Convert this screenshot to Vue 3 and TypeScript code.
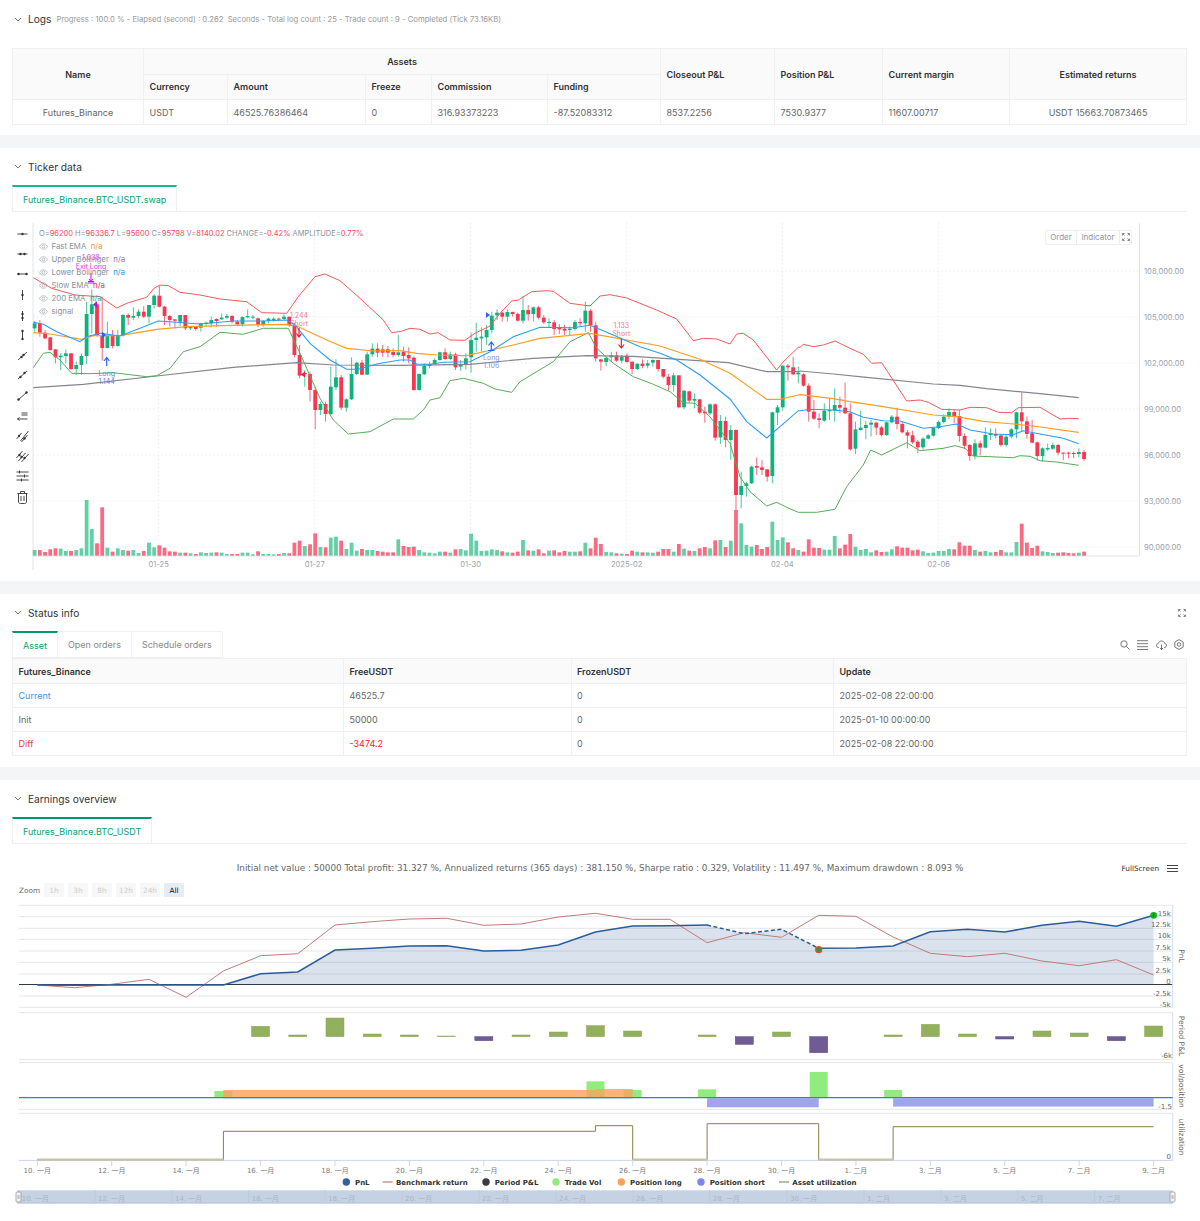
<script setup lang="ts">
type Candle = [number, number, number, number, number];

// candles read off the chart: wick top, body top, body bottom, wick bottom, up?
const raw: Candle[] = [
  [303,310,325,335,1],[300,310,338,350,0],[330,338,355,358,0],[352,352,390,392,0],[388,388,412,430,0],[400,407,412,450,1],[388,400,408,430,1],[400,400,447,450,0],[425,435,447,465,1],[400,408,435,465,1],
  [245,282,408,432,1],[208,253,282,340,1],[250,253,345,350,0],[230,345,384,422,0],[305,347,384,385,1],[330,347,378,385,0],[330,347,378,380,1],[282,285,347,350,1],[280,285,293,315,0],[262,288,293,300,1],
  [268,275,288,295,1],[258,275,290,295,0],[255,255,290,310,1],[222,227,255,265,1],[197,227,260,262,0],[258,260,288,315,0],[285,288,300,320,0],[298,298,302,325,0],[285,285,305,318,1],[285,285,325,330,0],
  [318,320,325,330,1],[318,320,327,332,0],[308,310,323,335,1],[305,308,312,320,1],[290,300,310,322,1],[295,297,303,320,0],[280,293,298,300,1],[282,288,293,298,1],[285,288,305,310,0],[300,305,313,318,0],
  [290,291,313,320,1],[268,288,292,295,1],[285,290,293,298,1],[293,295,315,322,0],[300,303,315,320,1],[293,296,303,310,1],[292,296,300,305,1],[293,296,299,304,0],[283,290,297,300,1],[290,290,316,320,0],
  [308,316,405,412,0],[375,405,467,475,0],[450,459,462,500,1],[455,462,510,545,0],[500,510,570,628,0],[545,552,570,585,1],[545,552,582,605,0],[440,500,582,585,1],[418,472,502,510,1],[465,472,563,570,0],
  [535,538,563,575,1],[412,462,538,540,1],[425,428,462,465,1],[420,428,464,465,0],[395,403,464,465,1],[370,386,403,410,1],[370,386,398,412,0],[375,388,398,410,0],[378,388,398,412,0],[385,396,405,412,0],
  [345,397,405,410,1],
  [380,395,408,425,0],[382,405,415,430,0],[410,413,510,512,0],[460,462,510,512,1],[430,437,463,465,1],[425,432,438,445,1],[415,420,432,435,1],[395,397,420,422,1],[385,397,417,420,0],
  [395,403,417,420,1],[398,403,442,450,0],[420,432,440,452,1],[400,415,435,448,1],[338,360,412,458,1],[308,353,360,395,1],[322,350,355,395,1],[315,330,352,375,1],[275,287,330,340,1],[268,278,286,300,1],
  [275,278,290,305,0],[268,276,290,305,1],[275,276,282,290,0],[278,282,302,305,0],[228,270,302,310,1],[255,270,283,302,0],[260,262,282,305,1],[258,262,293,298,0],[285,293,307,312,0],[295,306,309,322,1],
  [300,307,327,345,0],[312,323,328,342,0],[315,326,332,345,0],[320,326,330,345,1],[300,306,327,332,1],[295,306,310,320,0],[245,272,310,335,1],[268,272,316,335,0],[305,316,415,425,0],[418,418,425,452,0],
  [410,414,426,438,1],[395,406,412,425,1],[395,406,422,425,0],[405,410,422,430,1],[400,407,426,428,0],[425,425,447,462,0],[430,431,447,450,1],[418,431,438,445,0],[420,430,437,445,1],[418,420,428,440,1],
  [420,420,447,455,0],[447,447,470,475,0],[462,470,495,512,0],[458,466,495,515,1],[466,466,562,565,0],[510,512,562,568,1],[512,514,542,548,0],[520,537,542,565,1],[538,538,578,582,0],[560,575,580,608,0],
  [550,553,580,585,1],[550,553,653,662,0],[585,603,652,672,1],[590,603,660,682,0],[615,630,660,720,1],[628,630,825,870,0],[755,798,825,865,1],[785,790,798,830,1],[737,740,790,792,1],[712,738,743,765,0],
  [720,742,750,765,0],[748,748,770,785,0],[575,577,768,790,1],[555,562,578,615,1],[435,437,562,572,1],[432,437,442,482,0],[410,442,463,465,0],[440,458,463,490,1],
  [460,463,497,500,0],[490,497,575,605,0],[540,575,596,600,0],[580,595,600,625,0],[550,572,602,605,1],[533,570,574,600,1],[505,555,572,605,1],[530,555,563,580,0],[488,563,580,582,0],[550,580,688,692,0],
  [605,628,686,702,1],[572,623,630,632,1],[602,615,624,658,1],[600,608,614,650,1],[605,608,623,645,0],[618,622,645,650,0],[605,607,645,648,1],[585,590,607,610,1],[563,590,612,628,0],[605,612,637,640,0],
  [630,637,647,685,0],[632,646,667,672,0],[660,665,682,700,0],[652,656,682,688,1],[642,646,656,658,1],[622,624,647,650,1],[602,606,624,628,1],[583,590,606,610,1],[565,576,590,598,1],[570,576,588,610,0],
  [570,588,648,665,0],[640,648,677,688,0],[672,675,708,722,0],[658,670,708,718,1],[662,670,683,705,0],[622,645,683,685,1],[625,640,645,660,1],[625,642,647,655,0],[643,646,675,680,0],[645,650,675,680,1],
  [625,628,650,655,1],[575,577,628,655,1],[517,577,604,635,0],[590,604,642,656,0],[600,640,668,670,0],[665,667,708,722,0],[682,685,708,725,1],[670,684,688,692,1],[668,675,686,690,1],[672,675,698,706,0],
  [697,698,701,720,0],[695,698,701,715,0],[695,699,702,715,0],[685,696,702,712,1],[690,696,717,723,0],
];

const vols = [
  990,990,996,988,985,986,993,993,990,985,840,927,970,862,983,995,985,990,992,990,
  999,993,968,982,976,983,994,995,998,998,1000,1002,997,999,998,997,998,1002,1002,1002,
  998,998,1003,994,1002,1002,1003,1002,999,1000,968,962,978,973,940,981,982,953,950,962,
  987,968,992,987,990,990,993,995,997,997,958,
  978,981,980,990,997,998,1000,995,995,
  998,988,987,991,941,962,993,992,988,990,994,997,998,995,960,991,992,988,1000,992,
  991,997,993,995,995,994,968,985,953,972,996,997,1000,1001,1002,992,995,997,997,998,
  995,987,987,995,972,986,992,993,985,981,985,961,960,981,962,870,910,975,980,975,
  987,981,905,960,952,967,985,990,
  995,958,983,984,989,989,948,985,974,942,980,990,987,997,991,996,995,988,979,983,
  983,991,989,994,999,998,993,993,987,988,967,977,977,990,995,993,997,996,990,997,
  997,966,911,968,984,977,994,996,999,998,997,999,1000,998,995,
];

const ky = (z: number) => 220 + z / 3;
const kx = (i: number) => 34.67 + 5.195 * i;

const candles = raw.map((c, i) => ({
  x: kx(i),
  wt: ky(c[0]),
  t: ky(c[1]),
  b: ky(c[2]),
  wb: ky(c[3]),
  color: c[4] ? "#10b27c" : "#f6374f",
  vtop: ky(vols[i] ?? 1000),
  vcolor: c[4] ? "#63cfa5" : "#fa6a82",
}));

// zoomed coordinates -> page coordinates, one list per 400px strip
const line = (...segs: [number, number[]][]) => {
  const pts: string[] = [];
  segs.forEach(([ox, p]) => {
    for (let i = 0; i < p.length; i += 2) {
      pts.push(`${(ox + p[i] / 3).toFixed(1)},${ky(p[i + 1]).toFixed(1)}`);
    }
  });
  return pts.join(" ");
};

const klines = [
  { color: "#85858f", w: 1.2, pts: line(
    [0, [100,503,250,493,470,468,700,442,890,428,1000,435,1195,436]],
    [400, [0,436,210,433,400,415,560,407,700,409,985,428,1100,455,1195,455]],
    [800, [0,453,100,462,200,472,400,492,480,496,560,506,720,521,836,533]]) },
  { color: "#f55a5a", w: 1, pts: line(
    [0, [100,173,155,205,225,225,300,230,350,264,385,248,440,232,462,205,480,195,505,197,540,217,600,225,660,237,740,245,785,278,860,280,895,230,945,170,975,162,1020,182,1080,235,1150,300,1175,338,1195,335]],
    [400, [0,335,30,325,60,328,90,342,115,338,150,360,195,361,225,340,270,318,300,280,335,243,355,240,395,215,440,212,460,214,510,250,570,258,600,228,630,224,680,234,770,270,830,297,880,362,910,355,950,357,990,372,1010,342,1030,340,1060,360,1130,450,1150,425,1195,382]],
    [800, [0,382,10,373,40,380,70,375,105,363,150,385,190,403,215,430,245,428,320,543,360,540,385,547,425,568,480,570,510,562,560,563,595,577,635,578,655,563,720,562,780,597,805,595,836,596]]) },
  { color: "#57ad57", w: 1, pts: line(
    [0, [100,443,130,400,150,397,180,420,215,460,270,461,340,458,440,470,470,467,510,445,550,395,600,380,660,337,730,343,790,325,865,325,900,400,960,535,1000,600,1045,642,1110,635,1180,597,1195,597]],
    [400, [0,597,40,597,70,570,90,540,120,533,150,482,190,475,250,490,285,507,335,517,360,485,460,425,510,365,565,338,590,385,640,430,700,470,760,493,810,515,850,548,885,550,930,590,990,670,1020,770,1050,815,1100,858,1130,847,1160,862,1195,877]],
    [800, [0,877,50,877,105,868,140,800,190,735,212,690,245,705,320,668,360,692,430,685,465,677,495,685,520,708,640,713,660,707,690,709,720,722,770,726,836,736]]) },
  { color: "#ff9d1e", w: 1.2, pts: line(
    [0, [100,338,150,342,245,358,280,347,360,347,470,328,560,320,700,316,860,313,890,318,980,360,1040,385,1120,393,1195,392]],
    [400, [0,392,50,400,110,405,200,407,340,375,420,355,570,340,780,378,900,418,990,460,1100,538,1140,538,1195,525]],
    [800, [0,524,100,536,150,545,250,560,400,585,470,590,550,604,640,612,700,618,836,637]]) },
  { color: "#2a9df4", w: 1.1, pts: line(
    [0, [100,307,130,313,170,335,240,365,260,350,300,340,360,348,420,325,475,303,520,306,600,312,700,303,790,303,860,300,885,315,930,370,990,420,1040,448,1075,448,1130,432,1195,421]],
    [400, [0,420,30,420,50,432,90,433,130,427,210,425,270,395,340,350,420,322,520,323,570,316,640,345,720,380,780,400,830,420,900,465,990,537,1040,605,1100,654,1140,620,1195,572]],
    [800, [0,572,30,568,100,570,150,575,190,592,250,602,300,603,370,625,420,620,470,612,510,630,580,642,640,644,670,632,720,642,790,655,836,671]]) },
];

const priceTicks = [
  ["108,000.00", 271], ["105,000.00", 317], ["102,000.00", 363],
  ["99,000.00", 409], ["96,000.00", 455], ["93,000.00", 501], ["90,000.00", 547],
] as [string, number][];
const timeTicks = [
  ["01-25", 158.7], ["01-27", 314.7], ["01-30", 470.7],
  ["2025-02", 626.7], ["02-04", 782.3], ["02-06", 938.7],
] as [string, number][];

const legend = [
  { name: "Fast EMA", value: "n/a", color: "#f7931a" },
  { name: "Upper Bollinger", value: "n/a", color: "#9c5fd6" },
  { name: "Lower Bollinger", value: "n/a", color: "#2196f3" },
  { name: "Slow EMA", value: "n/a", color: "#e91e63" },
  { name: "200 EMA", value: "n/a", color: "#26a69a" },
  { name: "signal", value: "", color: "" },
];

const ohlc = [
  ["O=", "96200"], ["H=", "96336.7"], ["L=", "95600"], ["C=", "95798"], ["V=", "8140.02"],
  ["CHANGE=", "-0.42%"], ["AMPLITUDE=", "0.77%"],
];

const tools = [
  { y: 234, d: "M-5 0H5", dots: [[0, 0]] },
  { y: 254, d: "M-5 0H5", dots: [[-2, 0], [2, 0]] },
  { y: 274, d: "M-5 0H5", dots: [[-4, 0], [4, 0]] },
  { y: 295, d: "M0 -5V5", dots: [[0, 0]] },
  { y: 316, d: "M0 -5V5", dots: [[0, -2], [0, 2]] },
  { y: 335, d: "M0 -5V5", dots: [[0, -4], [0, 4]] },
  { y: 356, d: "M-4.5 4L4.5 -4", dots: [[-1, 1], [1, -1]] },
  { y: 375, d: "M-4.5 4L4.5 -4", dots: [[-2, 2], [2, -2]] },
  { y: 396, d: "M-4.5 4L4.5 -4", dots: [[-4, 3.5], [4, -3.5]] },
  { y: 416, d: "M-5 3H5M-5 3L-3 1.5M-5 3L-3 4.5M-1 -1H5M-1 -3H5", dots: [] },
  { y: 436, d: "M-6 3L-1 -3M-1 6L5 -1M-2 5L6 -5", dots: [[-3.5, 0], [2, 2.5]] },
  { y: 456, d: "M-6 2L0 -5M-4 5L3 -3M-1 6L6 -2", dots: [[-3, -1], [-1, 1], [2, 2]] },
  { y: 476, d: "M-6 -4H6M-6 0H6M-6 4H6M-3 -5.5V-2.5M2 -1.5V1.5M-1 2.5V5.5", dots: [] },
  { y: 497, d: "M-5 -3.5H5M-2 -3.5V-5.5H2V-3.5M-4 -3.5V5C-4 6 -3 6.5 -2 6.5H2C3 6.5 4 6 4 5V-3.5M-1.5 -1V4M1.5 -1V4", dots: [] },
];

const markers = [
  { x: 91, y: 256.5, text: "1.038", color: "#e040fb" },
  { x: 91, y: 265.5, text: "Exit Long", color: "#e040fb" },
  { x: 106.7, y: 373, text: "Long", color: "#5b7cf0" },
  { x: 106.7, y: 381, text: "1.144", color: "#5b7cf0" },
  { x: 299, y: 315, text: "1.244", color: "#f47a86" },
  { x: 299, y: 323, text: "Short", color: "#f47a86" },
  { x: 491.3, y: 357, text: "Long", color: "#7d95f2" },
  { x: 491.3, y: 365, text: "1.106", color: "#7d95f2" },
  { x: 621.3, y: 325.3, text: "1.133", color: "#f47a86" },
  { x: 621.3, y: 333.3, text: "Short", color: "#f47a86" },
];

// earnings chart
const dx = (d: number) => 37.3 + 37.21 * d;
const ey = (z: number) => 850 + z / 3;
const series = (v: number[]) => v.map((z, d) => `${dx(d).toFixed(1)},${ey(z).toFixed(1)}`);

const pnl = [402,403,402,402,402,402,368,363,297,292,285,284,300,298,282,243,225,224,222,248,235,292,291,285,242,235,243,223,211,226,193];
const bench = [402,410,400,385,439,360,314,308,222,212,204,202,223,219,198,187,205,205,275,245,259,193,196,258,307,317,307,330,344,326,372];
const pnlPts = series(pnl);
const pnlSolidA = pnlPts.slice(0, 19).join(" ");
const pnlDash = pnlPts.slice(18, 22).join(" ");
const pnlSolidB = pnlPts.slice(21).join(" ");
const pnlArea = `${dx(0)},983.3 ${pnlPts.join(" ")} ${dx(30)},983.3`;
const benchPts = series(bench).join(" ");

const pnlGrid = [163, 197, 232, 265, 300, 334, 369, 435, 469].map(ey);
const pnlLabels = [
  ["15k", 185], ["12.5k", 219], ["10k", 253], ["7.5k", 288], ["5k", 322],
  ["2.5k", 356], ["0", 390], ["-2.5k", 425], ["-5k", 458],
] as [string, number][];
const paneLines = [485, 625, 635, 775, 787].map(ey);

const periods = [
  [6,526,557,0],[7,552,557,0],[8,501,557,0],[9,549,557,0],[10,552,557,0],[11,555,557,0],[12,557,569,1],
  [13,552,557,0],[14,543,557,0],[15,524,557,0],[16,540,557,0],[18,552,557,0],[19,557,580,1],[20,543,557,0],
  [21,557,605,1],[23,552,557,0],[24,520,557,0],[25,549,557,0],[26,557,564,1],[27,540,557,0],[28,546,557,0],
  [29,557,569,1],[30,525,557,0],
].map(([d, t, b, neg]) => ({
  x: dx(d) - 9,
  y: ey(t),
  h: (b - t) / 3,
  fill: neg ? "#6f5c94" : "#93b05f",
  stroke: neg ? "#5a4380" : "#86a450",
}));

const trades = [[5,720],[15,691],[16,717],[18,715],[21,663],[23,717]].map(([d, z]) => ({
  x: dx(d) - 9,
  y: ey(z),
  h: (740 - z) / 3,
}));

const util = [
  [0,926],[5,926],[5,841],[15,841],[15,824],[16,824],[16,926],[18,926],[18,818],[21,818],[21,926],[23,926],[23,827],[30,827],
].map(([d, z]) => `${dx(d).toFixed(1)},${ey(z).toFixed(1)}`).join(" ");

const xTicks = [
  "10. 一月","12. 一月","14. 一月","16. 一月","18. 一月","20. 一月","22. 一月","24. 一月",
  "26. 一月","28. 一月","30. 一月","1. 二月","3. 二月","5. 二月","7. 二月","9. 二月",
].map((text, i) => ({ text, x: dx(i * 2) }));

const navTicks = [
  ["10. 一月",21.7],["12. 一月",98],["14. 一月",175],["16. 一月",251.7],["18. 一月",328],["20. 一月",405],
  ["22. 一月",482],["24. 一月",559],["26. 一月",636],["28. 一月",712.7],["30. 一月",790],["1. 二月",867],
  ["3. 二月",944],["5. 二月",1020.7],["7. 二月",1097.7],
] as [string, number][];

const sideTitles = [
  ["PnL", 955], ["Period P&L", 1035], ["vol/position", 1085], ["utilization", 1136],
] as [string, number][];

const legendItems = [
  { x: 346.3, tx: 355, text: "PnL", color: "#2f5f9f", kind: "dot" },
  { x: 387.5, tx: 396, text: "Benchmark return", color: "#c27a7a", kind: "line" },
  { x: 486, tx: 494.7, text: "Period P&L", color: "#3a3a40", kind: "dot" },
  { x: 556, tx: 564.7, text: "Trade Vol", color: "#90ed7d", kind: "dot" },
  { x: 621.3, tx: 630, text: "Position long", color: "#f7a35c", kind: "dot" },
  { x: 701, tx: 709.7, text: "Position short", color: "#8085e9", kind: "dot" },
  { x: 784, tx: 792.3, text: "Asset utilization", color: "#948a5e", kind: "line" },
];

const zoomBtns = ["1h", "3h", "8h", "12h", "24h"];
</script>

<template>
  <div class="page">
    <section class="panel logs">
      <header class="head">
        <svg class="chev" width="8" height="5" viewBox="0 0 8 5"><path d="M1 1l3 3 3-3" /></svg>
        <span class="title">Logs</span>
        <span class="sub">Progress : 100.0 % - Elapsed (second) : 0.262&nbsp; Seconds - Total log count : 25 - Trade count : 9 - Completed (Tick 73.16KB)</span>
      </header>
      <table class="grid">
        <colgroup>
          <col style="width: 131px" /><col style="width: 84px" /><col style="width: 138px" /><col style="width: 66px" />
          <col style="width: 116px" /><col style="width: 113px" /><col style="width: 114px" /><col style="width: 108px" />
          <col style="width: 127px" /><col />
        </colgroup>
        <thead>
          <tr>
            <th rowspan="2" class="c">Name</th>
            <th colspan="5" class="c">Assets</th>
            <th rowspan="2">Closeout P&amp;L</th>
            <th rowspan="2">Position P&amp;L</th>
            <th rowspan="2">Current margin</th>
            <th rowspan="2" class="c">Estimated returns</th>
          </tr>
          <tr>
            <th>Currency</th><th>Amount</th><th>Freeze</th><th>Commission</th><th>Funding</th>
          </tr>
        </thead>
        <tbody>
          <tr>
            <td class="c">Futures_Binance</td><td>USDT</td><td>46525.76386464</td><td>0</td><td>316.93373223</td>
            <td>-87.52083312</td><td>8537.2256</td><td>7530.9377</td><td>11607.00717</td><td class="c">USDT 15663.70873465</td>
          </tr>
        </tbody>
      </table>
    </section>

    <section class="panel ticker">
      <header class="head">
        <svg class="chev" width="8" height="5" viewBox="0 0 8 5"><path d="M1 1l3 3 3-3" /></svg>
        <span class="title">Ticker data</span>
      </header>
      <div class="tabs">
        <span class="tab active bright">Futures_Binance.BTC_USDT.swap</span>
      </div>
      <div class="kchart">
        <svg width="1200" height="348" viewBox="0 222 1200 348" class="plot">
          <g stroke="#e9ebee" stroke-dasharray="1.5 2.5" stroke-width="1">
            <line v-for="t in priceTicks" :key="t[0]" x1="33" x2="1139" :y1="t[1]" :y2="t[1]" />
            <line v-for="t in timeTicks" :key="t[0]" :x1="t[1]" :x2="t[1]" y1="223" y2="556" />
          </g>
          <path d="M33 223V570M33 556H1139.5M1139.5 223V556" stroke="#e2e4e8" fill="none" />
          <g>
            <rect v-for="(c, i) in candles" :key="'v' + i" :x="c.x - 1.9" :width="3.8" :y="c.vtop" :height="555.7 - c.vtop" :fill="c.vcolor" />
          </g>
          <g v-for="(c, i) in candles" :key="'c' + i">
            <line :x1="c.x" :x2="c.x" :y1="c.wt" :y2="c.wb" :stroke="c.color" stroke-opacity="0.75" />
            <rect :x="c.x - 1.9" :width="3.8" :y="c.t" :height="Math.max(c.b - c.t, 1)" :fill="c.color" />
          </g>
          <polyline v-for="l in klines" :key="l.color" :points="l.pts" :stroke="l.color" :stroke-width="l.w" fill="none" />

          <g class="marks">
            <text v-for="m in markers" :key="m.x + m.text" :x="m.x" :y="m.y + 3" :fill="m.color" text-anchor="middle">{{ m.text }}</text>
          </g>
          <path d="M91 273V281M88 281.5H94M87.5 283H94.5M89 279l2 2.5 2-2.5" stroke="#d500f9" fill="none" />
          <path d="M97 301l-4 3.5 4 3.5z" fill="#a020e0" />
          <path d="M102 331.5l4 3.5-4 3.5z" fill="#2962ff" />
          <path d="M106.7 366V358M104 361l2.7-3.5 2.7 3.5" stroke="#2962ff" stroke-width="1.2" fill="none" />
          <path d="M299 328V336M296.5 333.5l2.5 3.5 2.5-3.5" stroke="#e5202f" stroke-width="1.2" fill="none" />
          <path d="M305 371.5l-4 3 4 3z" fill="#e5202f" />
          <path d="M486 312v6l4-3z" fill="#2962ff" />
          <path d="M491.3 350V343M488.5 345.5l2.8-3.5 2.8 3.5M488 350.5H494.5" stroke="#2962ff" stroke-width="1.2" fill="none" />
          <path d="M621.3 339V347M618.5 344.5l2.8 3.5 2.8-3.5" stroke="#e5202f" stroke-width="1.2" fill="none" />

          <g v-for="(tool, i) in tools" :key="i" :transform="`translate(22.5 ${tool.y})`">
            <path :d="tool.d" stroke="#333" fill="none" stroke-width="0.9" />
            <circle v-for="(dot, j) in tool.dots" :key="j" :cx="dot[0]" :cy="dot[1]" r="1.2" fill="#333" />
          </g>

          <text v-for="t in priceTicks" :key="t[0]" x="1144" :y="t[1] + 3" class="axis">{{ t[0] }}</text>
          <text v-for="t in timeTicks" :key="t[0]" :x="t[1]" y="567" class="axis" text-anchor="middle">{{ t[0] }}</text>
        </svg>
        <div class="ohlc">
          <div class="ohlc-row">
            <span v-for="o in ohlc" :key="o[0]" class="ohlc-item">{{ o[0] }}<b>{{ o[1] }}</b></span>
          </div>
          <div v-for="l in legend" :key="l.name" class="legend-row">
            <svg width="9" height="7" viewBox="0 0 10 7" class="eye">
              <path d="M0.5 3.5C2 1 3.5 0.5 5 0.5S8 1 9.5 3.5C8 6 6.5 6.5 5 6.5S2 6 0.5 3.5Z" />
              <circle cx="5" cy="3.5" r="1.5" />
            </svg>
            <span class="lname">{{ l.name }}</span>
            <span :style="{ color: l.color }">{{ l.value }}</span>
          </div>
        </div>
        <div class="kbtns">
          <span class="order">Order</span>
          <span class="indicator">Indicator</span>
          <span class="expand">
            <svg width="8" height="8" viewBox="0 0 8 8"><path d="M0.5 2.5V0.5H2.5M5.5 0.5H7.5V2.5M7.5 5.5V7.5H5.5M2.5 7.5H0.5V5.5M1 1l1.5 1.5M7 1L5.5 2.5M7 7L5.5 5.5M1 7l1.5-1.5" /></svg>
          </span>
        </div>
      </div>
    </section>

    <section class="panel status">
      <header class="head">
        <svg class="chev" width="8" height="5" viewBox="0 0 8 5"><path d="M1 1l3 3 3-3" /></svg>
        <span class="title">Status info</span>
        <svg class="full" width="8" height="8" viewBox="0 0 8 8"><path d="M0.5 2.5V0.5H2.5M5.5 0.5H7.5V2.5M7.5 5.5V7.5H5.5M2.5 7.5H0.5V5.5M1 1l1.5 1.5M7 1L5.5 2.5M7 7L5.5 5.5M1 7l1.5-1.5" /></svg>
      </header>
      <div class="status-tabs">
        <div class="tabs flat">
          <span class="tab active">Asset</span>
          <span class="tab">Open orders</span>
          <span class="tab">Schedule orders</span>
        </div>
        <div class="tool-icons">
          <svg width="10" height="10" viewBox="0 0 10 10"><circle cx="4" cy="4" r="3.2" /><path d="M6.4 6.4L9.5 9.5" /></svg>
          <svg width="11" height="10" viewBox="0 0 11 10"><path d="M0 0.7H11M0 3.7H11M0 6.7H11M0 9.5H11" /></svg>
          <svg width="11" height="10" viewBox="0 0 11 10"><path d="M3 7.5H2.5C1 7.5 0.5 6.3 0.5 5.4C0.5 4.2 1.5 3.4 2.4 3.4C2.8 1.8 4 1 5.5 1C7.2 1 8.4 2.1 8.6 3.4C9.6 3.5 10.5 4.2 10.5 5.4C10.5 6.5 9.6 7.5 8.5 7.5H8M5.5 4.5V9.5M4 8l1.5 1.5L7 8" /></svg>
          <svg width="10" height="11" viewBox="0 0 10 11"><path d="M5 0.6L9.2 3V8L5 10.4L0.8 8V3Z" /><circle cx="5" cy="5.5" r="1.8" /></svg>
        </div>
      </div>
      <table class="grid">
        <colgroup>
          <col style="width: 331px" /><col style="width: 227.5px" /><col style="width: 262.5px" /><col />
        </colgroup>
        <thead>
          <tr><th>Futures_Binance</th><th>FreeUSDT</th><th>FrozenUSDT</th><th>Update</th></tr>
        </thead>
        <tbody>
          <tr><td class="blue">Current</td><td>46525.7</td><td>0</td><td>2025-02-08 22:00:00</td></tr>
          <tr><td>Init</td><td>50000</td><td>0</td><td>2025-01-10 00:00:00</td></tr>
          <tr><td class="red">Diff</td><td class="red2">-3474.2</td><td>0</td><td>2025-02-08 22:00:00</td></tr>
        </tbody>
      </table>
    </section>

    <section class="panel earnings">
      <header class="head">
        <svg class="chev" width="8" height="5" viewBox="0 0 8 5"><path d="M1 1l3 3 3-3" /></svg>
        <span class="title">Earnings overview</span>
      </header>
      <div class="tabs">
        <span class="tab active">Futures_Binance.BTC_USDT</span>
      </div>
      <div class="hc-top">
        <div class="hc-title">Initial net value : 50000 Total profit: 31.327 %, Annualized returns (365 days) : 381.150 %, Sharpe ratio : 0.329, Volatility : 11.497 %, Maximum drawdown : 8.093 %</div>
        <div class="hc-full">
          <span>FullScreen</span>
          <i class="burger"><b></b><b></b><b></b></i>
        </div>
        <div class="hc-zoom">
          <span class="zlabel">Zoom</span>
          <span v-for="z in zoomBtns" :key="z" class="zbtn">{{ z }}</span>
          <span class="zbtn on">All</span>
        </div>
      </div>
      <svg width="1200" height="321" viewBox="0 900 1200 321" class="plot hc">
        <line v-for="y in pnlGrid" :key="y" x1="19" x2="1172.7" :y1="y" :y2="y" stroke="#e6e6e6" />
        <polygon :points="pnlArea" fill="#2b5c9a" fill-opacity="0.18" />
        <line x1="19" x2="1172.7" y1="983.5" y2="983.5" stroke="#333a45" />
        <polyline :points="benchPts" stroke="#c27a7a" fill="none" />
        <polyline :points="pnlSolidA" stroke="#2b5c9a" stroke-width="1.5" fill="none" />
        <polyline :points="pnlDash" stroke="#2b5c9a" stroke-width="1.5" stroke-dasharray="4 2.5" fill="none" />
        <polyline :points="pnlSolidB" stroke="#2b5c9a" stroke-width="1.5" fill="none" />
        <circle cx="818.7" cy="948.7" r="3" fill="#2e9e1f" stroke="#e24a3a" stroke-width="1.2" />
        <circle cx="1153.7" cy="914.3" r="3.4" fill="#0cb51a" />
        <path d="M1153.7 912.5V916" stroke="#0b5a17" stroke-width="0.7" />

        <line v-for="y in paneLines" :key="y" x1="19" x2="1172.7" :y1="y" :y2="y" stroke="#e6e6e6" />
        <path d="M1172.7 904.3V1006.5M1172.7 1011.7V1058.3M1172.7 1062.3V1108.3M1172.7 1112.3V1159.5" stroke="#d3dcee" fill="none" />
        <line x1="19" x2="1172.7" y1="1159.4" y2="1159.4" stroke="#ccd6eb" />

        <rect v-for="p in periods" :key="p.x" :x="p.x" :y="p.y" width="18" :height="p.h" :fill="p.fill" :stroke="p.stroke" stroke-width="0.5" />

        <rect v-for="t in trades" :key="t.x" :x="t.x" :y="t.y" width="18" :height="t.h" fill="#90ed7d" />
        <rect :x="dx(5)" y="1089" :width="dx(16) - dx(5)" height="7.7" fill="#f7a35c" fill-opacity="0.8" />
        <rect :x="dx(15)" y="1088" :width="dx(16) - dx(15)" height="1" fill="#f7a35c" fill-opacity="0.8" />
        <rect :x="dx(18)" y="1097.3" :width="dx(21) - dx(18)" height="9" fill="#8085e9" fill-opacity="0.75" />
        <rect :x="dx(23)" y="1097.3" :width="dx(30) - dx(23)" height="8.3" fill="#8085e9" fill-opacity="0.75" />
        <line x1="19" x2="1172.7" y1="1096.7" y2="1096.7" stroke="#0f8fd0" stroke-width="1.2" />
        <line :x1="dx(5)" :x2="dx(16)" y1="1097.6" y2="1097.6" stroke="#a5d2ec" stroke-width="1" />

        <polyline :points="util" stroke="#8a7f45" stroke-width="1" fill="none" />
        <path :d="`M${dx(0)} 1158.6H${dx(5)}M${dx(16)} 1158.6H${dx(18)}M${dx(21)} 1158.6H${dx(23)}`" stroke="#c9c3a8" stroke-width="2" fill="none" />

        <text v-for="l in pnlLabels" :key="l[0]" x="1170.7" :y="ey(l[1]) + 3" text-anchor="end" class="hc-label">{{ l[0] }}</text>
        <text x="1172" y="1057" text-anchor="end" class="hc-label">-6k</text>
        <text x="1172" y="1107.5" text-anchor="end" class="hc-label">-1.5</text>
        <text x="1171" y="1158" text-anchor="end" class="hc-label">0</text>

        <g v-for="t in xTicks" :key="t.text">
          <line :x1="t.x" :x2="t.x" y1="1159.5" y2="1165" stroke="#ccd6eb" />
          <text :x="t.x" y="1172" text-anchor="middle" class="hc-label cjk">{{ t.text }}</text>
        </g>
        <text v-for="s in sideTitles" :key="s[0]" :transform="`translate(1179 ${s[1]}) rotate(90)`" text-anchor="middle" class="hc-label side">{{ s[0] }}</text>

        <g v-for="l in legendItems" :key="l.text">
          <circle v-if="l.kind === 'dot'" :cx="l.x" cy="1181" r="3.7" :fill="l.color" />
          <line v-else :x1="l.x - 5" :x2="l.x + 5" y1="1181" y2="1181" :stroke="l.color" stroke-width="1.2" />
          <text :x="l.tx" y="1184" class="hc-legend">{{ l.text }}</text>
        </g>

        <rect x="17.3" y="1189.3" width="1155.4" height="13" fill="#c5d2e3" />
        <line x1="17.3" x2="1172.7" y1="1202" y2="1202" stroke="#b4c2d6" />
        <g v-for="n in navTicks" :key="n[0]">
          <line :x1="n[1] - 3" :x2="n[1] - 3" y1="1189.3" y2="1202" stroke="#bccadc" />
          <text :x="n[1]" y="1200" class="hc-label cjk nav">{{ n[0] }}</text>
        </g>
        <g fill="#f2f2f2" stroke="#9a9a9a" stroke-width="0.8">
          <rect x="16" y="1191" width="5" height="10" rx="1" />
          <rect x="1170" y="1191" width="5" height="10" rx="1" />
        </g>
        <path d="M18 1194V1198M19 1194V1198M1172 1194V1198M1173 1194V1198" stroke="#888" stroke-width="0.5" />
      </svg>
    </section>
  </div>
</template>

<style scoped>
.page {
  font-family: Inter, "Noto Sans CJK SC", sans-serif;
  font-size: 9px;
  color: #666;
  background: #f4f5f7;
  width: 1200px;
  display: flex;
  flex-direction: column;
  gap: 13px;
}
.panel {
  background: #fff;
  padding: 0 13px 0 12px;
  box-sizing: border-box;
}
.logs {
  height: 135px;
}
.ticker {
  height: 433px;
}
.status {
  height: 173px;
}
.earnings {
  height: 442px;
}
.head {
  height: 37px;
  display: flex;
  align-items: center;
  position: relative;
}
.logs .head {
  height: 38px;
  margin-bottom: 10px;
}
.chev {
  margin: 0 6px 0 2px;
  flex: none;
}
.chev path {
  stroke: #666;
  stroke-width: 0.9;
  fill: none;
}
.title {
  font-size: 10.2px;
  color: #333;
}
.sub {
  margin-left: 5px;
  color: #999;
  font-size: 7.7px;
}
.full {
  position: absolute;
  right: 1px;
  top: 15px;
}
.full path,
.expand path {
  stroke: #555;
  stroke-width: 0.7;
  fill: none;
}
.grid {
  width: 1175px;
  table-layout: fixed;
  border-collapse: collapse;
  font-size: 9px;
}
.grid th,
.grid td {
  border: 1px solid #eff0f2;
  padding: 0 5.5px;
  height: 24px;
  text-align: left;
  box-sizing: border-box;
  white-space: nowrap;
  overflow: hidden;
}
.grid th {
  background: #fafafa;
  color: #333;
  font-weight: 600;
  height: 25px;
}
.logs .grid th {
  height: 25.5px;
}
.logs .grid td {
  height: 25px;
}
.grid .c {
  text-align: center;
}
.blue {
  color: #3b8fe8;
}
.red {
  color: #d43f3a;
}
.red2 {
  color: #f51c1c;
}
.tabs {
  display: flex;
  border-bottom: 1px solid #eff0f2;
  height: 27px;
  box-sizing: border-box;
}
.tabs.flat {
  border-bottom: none;
}
.tab {
  display: flex;
  align-items: center;
  padding: 0 10px;
  border: 1px solid #eff0f2;
  border-left: none;
  color: #888;
  font-size: 9px;
  height: 27px;
  box-sizing: border-box;
}
.tab:first-child {
  border-left: 1px solid #eff0f2;
}
.tab.active {
  color: #08a36f;
  border-top: 2px solid #059669;
}
.tab.active.bright {
  border-top-color: #1db488;
}
.kchart {
  position: relative;
  margin: 10px -13px 0 -12px;
  height: 348px;
}
.plot {
  display: block;
}
.hc {
  margin: 0 -13px 0 -12px;
}
.axis {
  font-size: 7.6px;
  fill: #9aa1ac;
}
.marks text {
  font-size: 7px;
}
.ohlc {
  position: absolute;
  left: 39px;
  top: 5px;
  font-size: 7.8px;
  color: #8a929c;
  line-height: 13px;
}
.ohlc-row {
  display: flex;
  gap: 2px;
  height: 13px;
  font-size: 7.5px;
}
.ohlc-item b {
  font-weight: 400;
  color: #f6465d;
}
.legend-row {
  display: flex;
  align-items: center;
  height: 13px;
  gap: 3.5px;
}
.lname {
  margin-right: 1px;
}
.eye {
  flex: none;
  margin-right: 0;
}
.eye path,
.eye circle {
  fill: none;
  stroke: #9aa1ac;
  stroke-width: 0.7;
}
.kbtns {
  position: absolute;
  left: 1045px;
  top: 8px;
  width: 87px;
  height: 14.5px;
  display: flex;
  background: #fff;
  border: 1px solid #eceef0;
  border-radius: 2px;
  box-sizing: border-box;
  color: #8f96a0;
  font-size: 8px;
}
.kbtns span {
  display: flex;
  align-items: center;
  justify-content: center;
  border-right: 1px solid #eceef0;
}
.kbtns .order {
  width: 30px;
}
.kbtns .indicator {
  width: 42px;
}
.kbtns .expand {
  flex: 1;
  border-right: none;
}
.status-tabs {
  display: flex;
  align-items: center;
  justify-content: space-between;
  height: 27px;
}
.tool-icons {
  display: flex;
  gap: 7.4px;
  align-items: center;
  padding-right: 3px;
}
.tool-icons svg {
  fill: none;
  stroke: #555;
  stroke-width: 0.8;
}
.hc-top {
  position: relative;
  height: 57px;
  margin: 0 -13px 0 -12px;
}
.hc-title {
  position: absolute;
  left: 0;
  right: 0;
  top: 19px;
  text-align: center;
  font-family: "DejaVu Sans", sans-serif;
  font-size: 8.8px;
  color: #666;
  white-space: nowrap;
}
.hc-full {
  position: absolute;
  left: 1121.5px;
  top: 20px;
  display: flex;
  align-items: center;
  gap: 8px;
  font-family: "DejaVu Sans", sans-serif;
  font-size: 7.3px;
  color: #333;
}
.burger {
  display: flex;
  flex-direction: column;
  justify-content: space-between;
  width: 11px;
  height: 8px;
}
.burger b {
  display: block;
  height: 1.3px;
  background: #444;
}
.hc-zoom {
  position: absolute;
  left: 19px;
  top: 39px;
  display: flex;
  gap: 4px;
  align-items: center;
  font-family: "DejaVu Sans", sans-serif;
  font-size: 7.3px;
}
.zlabel {
  width: 21px;
  color: #666;
}
.zbtn {
  width: 20px;
  height: 14px;
  display: flex;
  align-items: center;
  justify-content: center;
  background: #f7f7f7;
  color: #ccc;
}
.zbtn.on {
  background: #e6ebf5;
  color: #111;
}
.hc-label {
  font-family: "DejaVu Sans", "Noto Sans CJK SC", sans-serif;
  font-size: 7px;
  fill: #666;
}
.cjk {
  fill: #7a7a7a;
}
.nav {
  fill: #a9b5c6;
}
.side {
  font-size: 7.5px;
}
.hc-legend {
  font-family: "DejaVu Sans", sans-serif;
  font-size: 7px;
  font-weight: 700;
  fill: #333;
}
</style>

<style>
html,
body {
  background: #fff;
}
</style>
